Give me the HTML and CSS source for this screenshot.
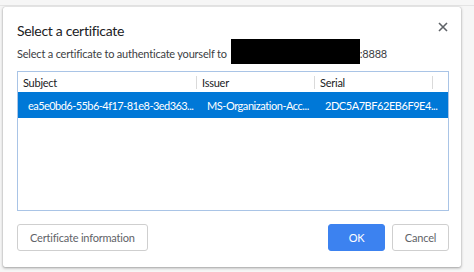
FILE: index.html
```html
<!DOCTYPE html>
<html lang="en">
<head>
  <meta charset="UTF-8" />
  <title>Select a certificate</title>
  <link rel="stylesheet" href="styles.css">
</head>
<body>
  <div class="backdrop">
    <div class="dialog">
      <div class="dialog-head">
        <h2>Select a certificate</h2>
        <button class="close" aria-label="Close">
          <svg width="10" height="10" viewBox="0 0 10 10"><path d="M1 1L9 9M9 1L1 9" stroke="#5f6368" stroke-width="1.6"/></svg>
        </button>
      </div>
      <p class="subtitle">Select a certificate to authenticate yourself to <span class="redacted"></span>:8888</p>

      <div class="cert-table">
        <div class="row header">
          <div class="cell">Subject</div>
          <div class="cell">Issuer</div>
          <div class="cell">Serial</div>
          <div class="cell last"></div>
        </div>
        <div class="row selected">
          <div class="cell">ea5e0bd6-55b6-4f17-81e8-3ed363...</div>
          <div class="cell">MS-Organization-Acc...</div>
          <div class="cell serial">2DC5A7BF62EB6F9E4...</div>
        </div>
      </div>

      <div class="actions">
        <button class="btn">Certificate information</button>
        <div class="right">
          <button class="btn primary">OK</button>
          <button class="btn">Cancel</button>
        </div>
      </div>
    </div>
  </div>
</body>
</html>
```

FILE: styles.css
```css
body {
  margin: 0;
  font-family: 'Lato', 'Noto Sans', sans-serif;
  background: #f6f6f6;
  color: #202124;
}
.backdrop {
  padding: 7px 13px 7px 3px;
  border-top: 1px solid #e4e4e4;
  margin-top: 5px;
  height: 267px;
  box-sizing: border-box;
}
.dialog {
  background: #fff;
  border-radius: 2px;
  box-shadow: 0 1px 3px rgba(0,0,0,0.35), 0 0 1px rgba(0,0,0,0.3);
  padding: 14px 12px 13px 14px;
  height: 260px;
  box-sizing: border-box;
  margin-top: -6px;
}
.dialog-head {
  display: flex;
  justify-content: space-between;
  align-items: flex-start;
}
.dialog-head h2 {
  margin: 0;
  font-size: 14px;
  letter-spacing: -0.3px;
  font-weight: 400;
  color: #202124;
  line-height: 20px;
}
.close {
  border: none;
  background: none;
  padding: 0;
  margin: 0;
  width: 12px;
  height: 12px;
  display: flex;
  align-items: center;
  justify-content: center;
}
.subtitle {
  margin: 3px 0 0;
  font-size: 11px;
  letter-spacing: -0.2px;
  line-height: 20px;
  color: #3c4043;
  display: flex;
  align-items: center;
}
.redacted {
  display: inline-block;
  width: 129px;
  height: 25px;
  background: #000;
  margin-left: 4px;
  margin-top: -6px;
}
.cert-table {
  margin-top: 7px;
  border: 1px solid #a9c4e6;
  height: 140px;
  width: 432px;
  box-sizing: border-box;
  font-size: 11px;
  letter-spacing: -0.25px;
}
.row {
  display: grid;
  grid-template-columns: 179px 118px 118px 1fr;
}
.row.header {
  height: 20px;
  align-items: center;
  color: #202124;
}
.row.header .cell {
  padding-left: 5px;
  border-right: 1px solid #dadada;
  line-height: 13px;
}
.row.header .cell.last {
  border-right: none;
}
.row.selected {
  background: #0078d7;
  color: #fff;
  height: 26px;
  align-items: center;
  letter-spacing: -0.45px;
}
.row.selected .cell {
  padding-left: 10px;
  white-space: nowrap;
  overflow: hidden;
}
.row.selected .cell:first-child {
  letter-spacing: -0.55px;
}
.row.selected .cell.serial {
  grid-column: 3 / -1;
}
.actions {
  margin-top: 13px;
  display: flex;
  justify-content: space-between;
  width: 432px;
}
.right {
  display: flex;
  gap: 7px;
}
.btn {
  font-family: inherit;
  font-size: 11px;
  letter-spacing: -0.2px;
  height: 27px;
  padding: 0 12px;
  border: 1px solid #cfcfcf;
  border-radius: 3px;
  background: #fff;
  color: #5f6368;
}
.btn.primary {
  background: #3c82f0;
  border-color: #3c82f0;
  color: #fff;
  width: 57px;
}
.right .btn:last-child {
  width: 57px;
  padding: 0;
}
```
